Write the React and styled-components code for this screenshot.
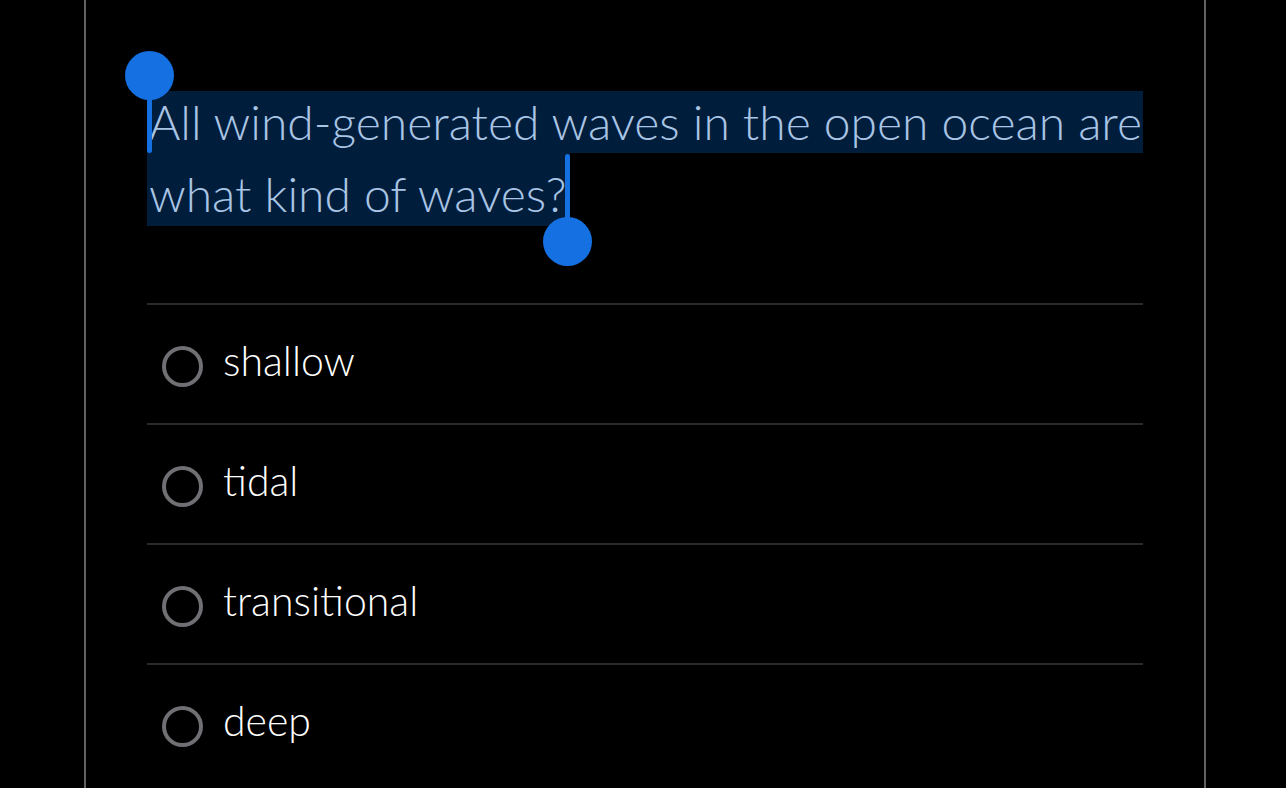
import React from "react";
import styled, { createGlobalStyle } from "styled-components";

const GlobalStyle = createGlobalStyle`
  html, body {
    margin: 0;
    padding: 0;
    background: #000;
  }
  body {
    font-family: "Lato Light", Lato, "Open Sans", sans-serif;
    overflow: hidden;
  }
  * { box-sizing: border-box; }
`;

const Frame = styled.div`
  margin-left: 84px;
  width: 1122px;
  height: 788px;
  border-left: 2px solid #626262;
  border-right: 2px solid #626262;
  padding: 91px 61px 0 61px;
  background: #000;
  display: flex;
  flex-direction: column;
`;

const Question = styled.div`
  display: flex;
  flex-direction: column;
  align-items: flex-start;
  font-weight: 300;
  font-size: 48px;
  color: #a9c4e4;
`;

const SelLine = styled.div`
  position: relative;
  background: #001e3c;
  align-self: ${(p) => (p.$full ? "stretch" : "flex-start")};
  height: ${(p) => p.$h}px;
  line-height: ${(p) => p.$h - p.$pt}px;
  padding-top: ${(p) => p.$pt}px;
  padding-left: 2px;
  padding-right: ${(p) => p.$pr || 0}px;
  white-space: nowrap;
`;

const Handle = styled.span`
  position: absolute;
  width: 5px;
  background: #1570e2;
  border-radius: 3px;
  ${(p) =>
    p.$end
      ? "right: 0; top: 1px; height: 88px;"
      : "left: 0; top: -16px; height: 78px;"}

  &::after {
    content: "";
    position: absolute;
    width: 49px;
    height: 49px;
    border-radius: 50%;
    background: #1570e2;
    left: -22px;
    ${(p) => (p.$end ? "bottom: -24px;" : "top: -24px;")}
  }
`;

const Options = styled.div`
  margin-top: 77px;
  display: flex;
  flex-direction: column;
`;

const Option = styled.label`
  display: flex;
  align-items: center;
  gap: 20px;
  height: 120px;
  padding: 4px 0 0 15px;
  border-top: 2px solid #2a2a2a;
  cursor: pointer;
`;

const Radio = styled.span`
  width: 41px;
  height: 41px;
  border-radius: 50%;
  border: 4px solid #707074;
  flex: none;
`;

const OptionText = styled.span`
  font-weight: 300;
  font-size: 41px;
  color: #fff;
  line-height: 1;
  margin-top: -12px;
`;

const options = ["shallow", "tidal", "transitional", "deep"];

export default function App() {
  return (
    <>
      <GlobalStyle />
      <Frame>
        <Question>
          <SelLine $full $h={62} $pt={0}>
            <Handle />
            All wind-generated waves in the open ocean are
          </SelLine>
          <SelLine $h={73} $pt={8} $pr={3}>
            what kind of waves?
            <Handle $end />
          </SelLine>
        </Question>
        <Options>
          {options.map((o) => (
            <Option key={o}>
              <Radio />
              <OptionText>{o}</OptionText>
            </Option>
          ))}
        </Options>
      </Frame>
    </>
  );
}
